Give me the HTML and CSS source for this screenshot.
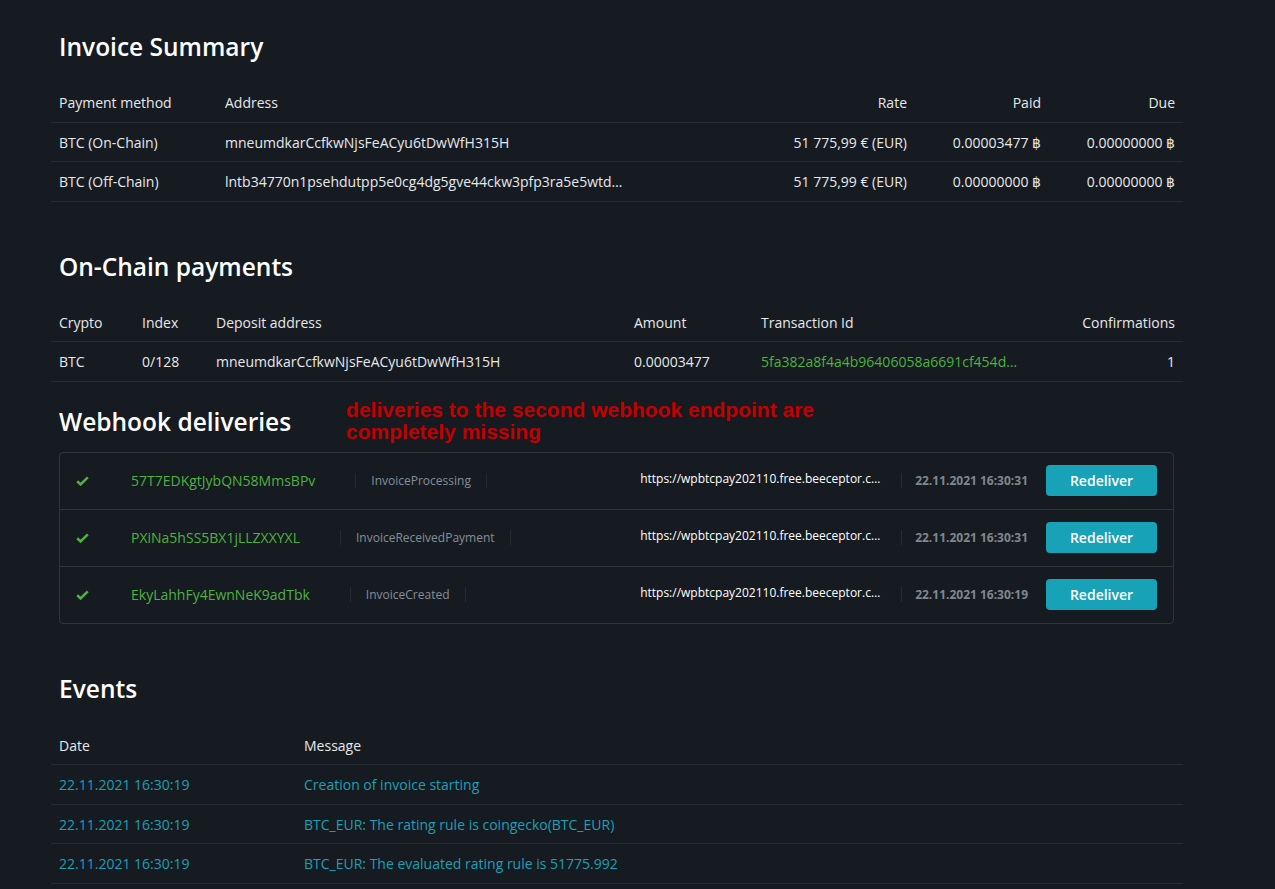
FILE: index.html
```html
<!DOCTYPE html>
<html>
<head>
  <title>Invoice</title>
  <link rel="stylesheet" href="styles.css">
</head>
<body>
  <div class="wrap">
    <section class="sec sec-summary">
      <h3>Invoice Summary</h3>
      <table class="tbl summary">
        <colgroup><col style="width:166px"><col><col style="width:160px"><col style="width:134px"><col style="width:134px"></colgroup>
        <thead>
          <tr><th>Payment method</th><th>Address</th><th class="r">Rate</th><th class="r">Paid</th><th class="r">Due</th></tr>
        </thead>
        <tbody>
          <tr>
            <td>BTC (On-Chain)</td>
            <td><span class="trunc addr">mneumdkarCcfkwNjsFeACyu6tDwWfH315H</span></td>
            <td class="r">51 775,99 € (EUR)</td>
            <td class="r">0.00003477 ฿</td>
            <td class="r">0.00000000 ฿</td>
          </tr>
          <tr>
            <td>BTC (Off-Chain)</td>
            <td><span class="trunc addr">lntb34770n1psehdutpp5e0cg4dg5gve44ckw3pfp3ra5e5wtdkq9h0fzvqzpgxqyz5vqsp5</span></td>
            <td class="r">51 775,99 € (EUR)</td>
            <td class="r">0.00000000 ฿</td>
            <td class="r">0.00000000 ฿</td>
          </tr>
        </tbody>
      </table>
    </section>

    <section class="sec sec-onchain">
      <h3>On-Chain payments</h3>
      <table class="tbl">
        <colgroup><col style="width:83px"><col style="width:74px"><col style="width:418px"><col style="width:127px"><col style="width:321px"><col style="width:109px"></colgroup>
        <thead>
          <tr><th>Crypto</th><th>Index</th><th>Deposit address</th><th>Amount</th><th>Transaction Id</th><th class="r">Confirmations</th></tr>
        </thead>
        <tbody>
          <tr>
            <td>BTC</td>
            <td>0/128</td>
            <td>mneumdkarCcfkwNjsFeACyu6tDwWfH315H</td>
            <td>0.00003477</td>
            <td><span class="trunc txid">5fa382a8f4a4b96406058a6691cf454d1e0b7c93a2</span></td>
            <td class="r">1</td>
          </tr>
        </tbody>
      </table>
    </section>

    <section class="sec sec-hooks">
      <div class="hook-head">
        <h3>Webhook deliveries</h3>
        <div class="note">deliveries to the second webhook endpoint are<br>completely missing</div>
      </div>
      <div class="hooks">
        <div class="hook">
          <span class="ok"><svg width="13" height="10" viewBox="0 0 13 10"><path d="M1.2 5.2 L4.6 8.4 L11.8 1.4" fill="none" stroke="#4fb13e" stroke-width="2.6"/></svg></span>
          <span class="hid">57T7EDKgtJybQN58MmsBPv</span>
          <span class="htype">InvoiceProcessing</span>
          <div class="hright">
            <span class="hurl">https://wpbtcpay202110.free.beeceptor.com/webhook</span>
            <span class="hdate">22.11.2021 16:30:31</span>
            <button class="btn">Redeliver</button>
          </div>
        </div>
        <div class="hook">
          <span class="ok"><svg width="13" height="10" viewBox="0 0 13 10"><path d="M1.2 5.2 L4.6 8.4 L11.8 1.4" fill="none" stroke="#4fb13e" stroke-width="2.6"/></svg></span>
          <span class="hid">PXiNa5hSS5BX1jLLZXXYXL</span>
          <span class="htype">InvoiceReceivedPayment</span>
          <div class="hright">
            <span class="hurl">https://wpbtcpay202110.free.beeceptor.com/webhook</span>
            <span class="hdate">22.11.2021 16:30:31</span>
            <button class="btn">Redeliver</button>
          </div>
        </div>
        <div class="hook">
          <span class="ok"><svg width="13" height="10" viewBox="0 0 13 10"><path d="M1.2 5.2 L4.6 8.4 L11.8 1.4" fill="none" stroke="#4fb13e" stroke-width="2.6"/></svg></span>
          <span class="hid">EkyLahhFy4EwnNeK9adTbk</span>
          <span class="htype">InvoiceCreated</span>
          <div class="hright">
            <span class="hurl">https://wpbtcpay202110.free.beeceptor.com/webhook</span>
            <span class="hdate">22.11.2021 16:30:19</span>
            <button class="btn">Redeliver</button>
          </div>
        </div>
      </div>
    </section>

    <section class="sec sec-events">
      <h3>Events</h3>
      <table class="tbl events">
        <colgroup><col style="width:245px"><col></colgroup>
        <thead>
          <tr><th>Date</th><th>Message</th></tr>
        </thead>
        <tbody>
          <tr><td>22.11.2021 16:30:19</td><td>Creation of invoice starting</td></tr>
          <tr><td>22.11.2021 16:30:19</td><td>BTC_EUR: The rating rule is coingecko(BTC_EUR)</td></tr>
          <tr><td>22.11.2021 16:30:19</td><td>BTC_EUR: The evaluated rating rule is 51775.992</td></tr>
        </tbody>
      </table>
    </section>
  </div>
</body>
</html>
```

FILE: styles.css
```css
body {
  margin: 0;
  background: #161b22;
  color: #e6e8ea;
  font-family: "Open Sans", "DejaVu Sans", sans-serif;
  font-size: 14px;
}

.wrap {
  width: 1132px;
  margin-left: 51px;
  padding-top: 32px;
}

h3 {
  margin: 0 0 0 8px;
  font-size: 24.5px;
  line-height: 29px;
  font-weight: 600;
  color: #fff;
}

.sec-summary { margin-bottom: 50px; }
.sec-onchain { margin-bottom: 25px; }
.sec-hooks { margin-bottom: 50px; }

.tbl {
  width: 100%;
  margin-top: 22px;
  border-collapse: collapse;
  table-layout: fixed;
}
.tbl th,
.tbl td {
  padding: 9px 8px 8.5px;
  line-height: 21px;
  text-align: left;
  font-weight: 400;
  border-bottom: 1px solid #262c34;
  white-space: nowrap;
}
.tbl .r { text-align: right; }

.trunc {
  display: inline-block;
  vertical-align: top;
  overflow: hidden;
  text-overflow: ellipsis;
  white-space: nowrap;
}
.addr { max-width: 400px; }
.txid { max-width: 259px; color: #4fb13e; }

.events { margin-top: 23px; }
.events td { color: #1f9fb4; }

/* webhooks */
.hook-head {
  display: flex;
  align-items: flex-start;
}
.note {
  margin: -8px 0 -15px 55px;
  font-family: "Liberation Sans", Arial, sans-serif;
  font-weight: 700;
  font-size: 21px;
  line-height: 22px;
  color: #c10000;
}

.hooks {
  margin: 16px 9px 0 8px;
  border: 1px solid #2f353d;
  border-radius: 4px;
}
.hook {
  display: flex;
  align-items: center;
  padding: 12.5px 16px;
  border-top: 1px solid #2f353d;
}
.hook:first-child { border-top: 0; }

.ok {
  width: 55px;
  display: flex;
  align-items: center;
}
.hid {
  color: #4fb13e;
  font-size: 14px;
  line-height: 21px;
  margin-right: 40px;
}
.htype {
  font-size: 12px;
  line-height: 15px;
  color: #868e96;
  padding: 0 15px;
  border-left: 1px solid #262b32;
  border-right: 1px solid #262b32;
}
.hright {
  margin-left: auto;
  display: flex;
  align-items: center;
}
.hurl {
  max-width: 246px;
  font-size: 12px;
  line-height: 15px;
  color: #fff;
  overflow: hidden;
  text-overflow: ellipsis;
  white-space: nowrap;
  margin-top: -5px;
}
.hdate {
  margin-left: 15px;
  padding-left: 13px;
  border-left: 1px solid #262b32;
  font-size: 12px;
  line-height: 15px;
  font-weight: 700;
  color: #80878f;
}
.btn {
  margin-left: 18px;
  width: 111px;
  height: 31px;
  border: 0;
  border-radius: 4px;
  background: #17a2b8;
  color: #fff;
  font-family: "Open Sans", sans-serif;
  font-size: 14px;
  font-weight: 600;
}
```
